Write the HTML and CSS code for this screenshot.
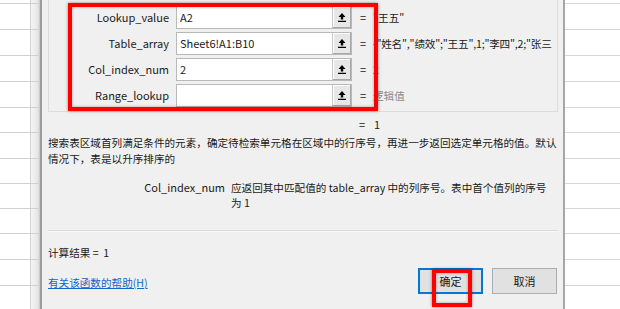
FILE: index.html
```html
<!DOCTYPE html>
<html lang="zh-CN">
<head>
<meta charset="utf-8">
<title>函数参数</title>
<link rel="stylesheet" href="styles.css">
</head>
<body>
<div class="screen">
  <div class="sheet sheet-left">
    <div class="grid-row r3"></div><div class="grid-row r26"></div><div class="grid-row r26"></div><div class="grid-row r26"></div><div class="grid-row r26"></div><div class="grid-row r25"></div><div class="grid-row r26"></div><div class="grid-row r25"></div><div class="grid-row r25"></div><div class="grid-row r25"></div><div class="grid-row r26"></div><div class="grid-row r26"></div><div class="grid-row r26"></div>
  </div>
  <div class="dialog">
    <div class="groupbox">
      <div class="arg">
        <span class="arg-label">Lookup_value</span>
        <div class="field"><span class="field-text">A2</span><span class="ref-btn"><svg width="8" height="9" viewBox="0 0 8 9"><path d="M4 0L0.5 4H2.8V6.6H5.2V4H7.5Z M0 7.8H8V9H0Z" fill="#000"/></svg></span></div>
        <span class="eq">=</span>
        <span class="val">"王五"</span>
      </div>
      <div class="arg">
        <span class="arg-label">Table_array</span>
        <div class="field"><span class="field-text">Sheet6!A1:B10</span><span class="ref-btn"><svg width="8" height="9" viewBox="0 0 8 9"><path d="M4 0L0.5 4H2.8V6.6H5.2V4H7.5Z M0 7.8H8V9H0Z" fill="#000"/></svg></span></div>
        <span class="eq">=</span>
        <span class="val val-tight">{"姓名","绩效";"王五",1;"李四",2;"张三</span>
      </div>
      <div class="arg">
        <span class="arg-label">Col_index_num</span>
        <div class="field"><span class="field-text">2</span><span class="ref-btn"><svg width="8" height="9" viewBox="0 0 8 9"><path d="M4 0L0.5 4H2.8V6.6H5.2V4H7.5Z M0 7.8H8V9H0Z" fill="#000"/></svg></span></div>
        <span class="eq">=</span>
        <span class="val">2</span>
      </div>
      <div class="arg">
        <span class="arg-label">Range_lookup</span>
        <div class="field"><span class="field-text"></span><span class="ref-btn"><svg width="8" height="9" viewBox="0 0 8 9"><path d="M4 0L0.5 4H2.8V6.6H5.2V4H7.5Z M0 7.8H8V9H0Z" fill="#000"/></svg></span></div>
        <span class="eq">=</span>
        <span class="val muted">逻辑值</span>
      </div>
    </div>
    <div class="result-line"><span class="eq">=</span><span class="res-val">1</span></div>
    <p class="desc">搜索表区域首列满足条件的元素，确定待检索单元格在区域中的行序号，再进一步返回选定单元格的值。默认情况下，表是以升序排序的</p>
    <div class="param-help">
      <span class="param-name">Col_index_num</span>
      <span class="param-desc">应返回其中匹配值的 table_array 中的列序号。表中首个值列的序号为 1</span>
    </div>
    <div class="separator"></div>
    <div class="calc">计算结果 =&nbsp;&nbsp;1</div>
    <div class="footer">
      <a class="help-link" href="#">有关该函数的帮助(H)</a>
      <div class="buttons">
        <button class="btn btn-default">确定</button>
        <button class="btn">取消</button>
      </div>
    </div>
  </div>
  <div class="sheet sheet-right">
    <div class="grid-row r3"></div><div class="grid-row r26"></div><div class="grid-row r26"></div><div class="grid-row r26"></div><div class="grid-row r26"></div><div class="grid-row r25"></div><div class="grid-row r26"></div><div class="grid-row r25"></div><div class="grid-row r25"></div><div class="grid-row r25"></div><div class="grid-row r26"></div><div class="grid-row r26"></div><div class="grid-row r26"></div>
  </div>
  <div class="highlight hl-args"></div>
  <div class="highlight hl-ok"></div>
</div>
</body>
</html>
```

FILE: styles.css
```css
* { box-sizing: border-box; }
html, body { margin: 0; padding: 0; }
body {
  width: 620px;
  height: 309px;
  overflow: hidden;
  background: #fff;
  font-family: "Noto Sans CJK SC", "Microsoft YaHei", sans-serif;
  font-size: 11px;
  color: #1a1a1a;
}
.screen {
  position: relative;
  display: flex;
  width: 620px;
  height: 309px;
  overflow: hidden;
}
.sheet {
  display: flex;
  flex-direction: column;
  background: #fff;
  flex: none;
}
.grid-row { border-bottom: 1px solid #d6d6d6; flex: none; }
.grid-row.r3 { height: 4px; }
.grid-row.r25 { height: 25px; }
.grid-row.r26 { height: 26px; }
.sheet-left {
  width: 40px;
  background: linear-gradient(to right, #fff 0, #fff 30px, #d4d4d4 30px, #d4d4d4 31px, #f4f4f4 31px, #e6e6e6 38px, #c4c4c4 40px);
}
.sheet-left .grid-row { border-bottom-color: #d0d0d0; }
.sheet-right { flex: 1; }

.dialog {
  width: 525px;
  flex: none;
  height: 309px;
  background: #f0f0f0;
  border-left: 2px solid #9c9c9c;
  border-right: 2px solid #a6a6a6;
  padding: 0 5px 0 6px;
  display: flex;
  flex-direction: column;
  overflow: hidden;
}
.groupbox {
  height: 112px;
  border: 1px solid #dcdcdc;
  border-top: none;
  padding-top: 4px;
  display: flex;
  flex-direction: column;
  overflow: hidden;
}
.arg {
  display: flex;
  align-items: center;
  height: 26px;
  flex: none;
}
.arg-label {
  width: 120px;
  text-align: right;
  flex: none;
  font-size: 11px;
}
.field {
  margin-left: 7px;
  width: 176px;
  height: 23px;
  background: #fff;
  border: 1px solid #b9b9b9;
  display: flex;
  align-items: stretch;
  flex: none;
}
.field-text {
  flex: 1;
  padding-left: 3px;
  line-height: 21px;
  font-size: 11px;
}
.ref-btn {
  width: 19px;
  flex: none;
  background: #e7e7e7;
  border-left: 1px solid #c8c8c8;
  box-shadow: inset -1px -1px 0 #a8a8a8, inset 1px 1px 0 #fff;
  display: flex;
  align-items: center;
  justify-content: center;
}
.arg .eq {
  width: 20px;
  text-align: center;
  flex: none;
  margin-left: 1px;
}
.val {
  white-space: nowrap;
  overflow: hidden;
  flex: 1;
  font-size: 10.6px;
}
.val-tight { letter-spacing: -0.2px; }
.val.muted { color: #8c8c8c; }

.result-line {
  height: 16px;
  margin-top: 4px;
  line-height: 16px;
  padding-left: 311px;
  display: flex;
  gap: 9px;
}
.desc {
  margin: 3px 0 0 0;
  line-height: 16px;
  font-size: 10.6px;
}
.param-help {
  display: flex;
  margin-top: 13px;
  line-height: 15px;
}
.param-name {
  width: 177px;
  text-align: right;
  flex: none;
  font-size: 11px;
}
.param-desc {
  margin-left: 6px;
  width: 322px;
  font-size: 10.6px;
}
.separator {
  margin-top: 20px;
  height: 2px;
  border-top: 1px solid #dadada;
  border-bottom: 1px solid #f8f8f8;
  flex: none;
}
.calc {
  margin-top: 13px;
  line-height: 16px;
  font-size: 10.6px;
}
.footer {
  display: flex;
  align-items: center;
  justify-content: space-between;
  margin-top: 6px;
  height: 28px;
}
.help-link {
  color: #1066c8;
  text-decoration: underline;
  font-size: 10.6px;
  margin-top: 3px;
}
.buttons {
  display: flex;
  gap: 9px;
  padding-right: 1px;
}
.btn {
  width: 65px;
  height: 26px;
  background: #e1e1e1;
  border: 1px solid #adadad;
  font-family: inherit;
  font-size: 11px;
  color: #1a1a1a;
  padding: 0;
}
.btn-default {
  border: 2px solid #0078d7;
}
.highlight {
  position: absolute;
  border: 4px solid #ff0000;
  box-shadow: 0 0 3px rgba(0,0,0,0.45), inset 0 0 3px rgba(0,0,0,0.35);
  pointer-events: none;
}
.hl-args {
  left: 68px;
  top: 3px;
  width: 310px;
  height: 108px;
}
.hl-ok {
  left: 432px;
  top: 269px;
  width: 40px;
  height: 38px;
}
```
